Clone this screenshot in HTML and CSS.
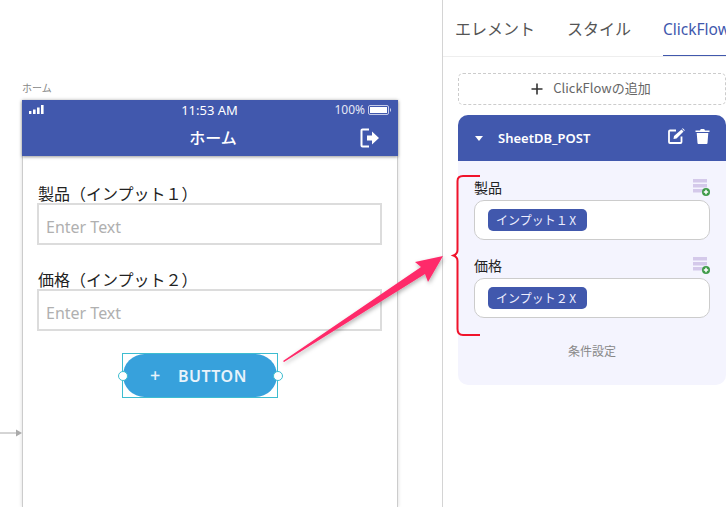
FILE: index.html
```html
<!DOCTYPE html>
<html lang="ja">
<head>
<meta charset="utf-8">
<title>ClickFlow</title>
<link rel="stylesheet" href="styles.css">
</head>
<body>
<div class="app">
  <main class="canvas">
    <div class="screen-label">ホーム</div>
    <section class="phone">
      <header class="appbar">
        <div class="status">
          <svg class="signal" width="16" height="9" viewBox="0 0 16 9"><rect x="0" y="6" width="2.4" height="3" fill="#fff"/><rect x="4" y="4.5" width="2.6" height="4.5" fill="#fff"/><rect x="8" y="2.500" width="2.6" height="6.500" fill="#fff"/><rect x="12" y="0" width="2.600" height="9" fill="#fff"/></svg>
          <span class="time">11:53 AM</span>
          <span class="battery"><span>100%</span>
            <svg width="24" height="10" viewBox="0 0 24 10"><rect x="0.500" y="0.500" width="20" height="9" rx="1.500" fill="none" stroke="#c5cbe8"/><rect x="2" y="2" width="17" height="6" fill="#fff"/><rect x="22" y="3.500" width="1" height="3" fill="#c5cbe8"/></svg>
          </span>
        </div>
        <div class="titlebar">
          <span class="apptitle">ホーム</span>
          <svg class="logout" width="20" height="20" viewBox="0 0 20 20"><path d="M9 1.500H2.500a1 1 0 0 0-1 1v15a1 1 0 0 0 1 1H9" fill="none" stroke="#fff" stroke-width="2"/><path d="M7 7.500h5V3.500l7 6.500-7 6.500v-4H7z" fill="#fff"/></svg>
        </div>
      </header>
      <div class="form">
        <div class="form-field">
          <label class="form-label">製品（インプット１）</label>
          <div class="text-input">Enter Text</div>
        </div>
        <div class="form-field">
          <label class="form-label">価格（インプット２）</label>
          <div class="text-input">Enter Text</div>
        </div>
        <div class="button-row">
          <div class="selection">
            <button class="pill"><span class="plus">+</span>BUTTON</button>
            <i class="handle handle-left"></i>
            <i class="handle handle-right"></i>
          </div>
        </div>
      </div>
    </section>
    <svg class="connector" width="23" height="10" viewBox="0 0 23 10"><path d="M0 5H17" stroke="#aaa" stroke-width="1"/><path d="M16 1.500L22 5L16 8.500z" fill="#aaa"/></svg>
  </main>

  <aside class="panel">
    <nav class="tabs">
      <span class="tab">エレメント</span>
      <span class="tab">スタイル</span>
      <span class="tab tab-active">ClickFlow</span>
    </nav>
    <div class="add-flow"><span class="add-plus"><svg width="12" height="12" viewBox="0 0 12 12"><path d="M6 0.500V11.500M0.500 6H11.500" stroke="#333" stroke-width="1.600"/></svg></span>ClickFlowの追加</div>
    <section class="card">
      <header class="card-head">
        <span class="caret"></span>
        <span class="card-title">SheetDB_POST</span>
        <svg class="edit" width="17" height="16" viewBox="0 0 17 16"><path d="M8 2.500H2a1 1 0 0 0-1 1V14a1 1 0 0 0 1 1h10.500a1 1 0 0 0 1-1V8.500" fill="none" stroke="#fff" stroke-width="1.800"/><path d="M13.500 1.500l2 2L8.500 10.500 5.500 11l.5-3zM14 0.800l.8-.6 2 2-.6.800z" fill="#fff"/></svg>
        <svg class="trash" width="15" height="16" viewBox="0 0 15 16"><path d="M0.500 2.500H5L5.800 1h3.400L10 2.500h4.500V4H0.500z" fill="#fff"/><path d="M1.700 5h11.600l-.8 10a1 1 0 0 1-1 1H3.500a1 1 0 0 1-1-1z" fill="#fff"/></svg>
      </header>
      <div class="card-body">
        <div class="param">
          <div class="param-head">
            <span class="param-label">製品</span>
            <svg class="param-icon" width="18" height="18" viewBox="0 0 18 18"><rect x="0" y="0" width="14" height="3.500" fill="#d4c9ea"/><rect x="0" y="5" width="14" height="3.500" fill="#d4c9ea"/><rect x="0" y="10" width="14" height="3.500" fill="#d4c9ea"/><circle cx="13" cy="13" r="4" fill="#3f9b4a"/><path d="M13 10.800v4.400M10.800 13h4.400" stroke="#fff" stroke-width="1.500"/></svg>
          </div>
          <div class="param-box"><span class="chip">インプット１ X</span></div>
        </div>
        <div class="param">
          <div class="param-head">
            <span class="param-label">価格</span>
            <svg class="param-icon" width="18" height="18" viewBox="0 0 18 18"><rect x="0" y="0" width="14" height="3.500" fill="#d4c9ea"/><rect x="0" y="5" width="14" height="3.500" fill="#d4c9ea"/><rect x="0" y="10" width="14" height="3.500" fill="#d4c9ea"/><circle cx="13" cy="13" r="4" fill="#3f9b4a"/><path d="M13 10.800v4.400M10.800 13h4.400" stroke="#fff" stroke-width="1.500"/></svg>
          </div>
          <div class="param-box"><span class="chip">インプット２ X</span></div>
        </div>
        <div class="conditions">条件設定</div>
      </div>
    </section>
  </aside>
</div>

<svg class="annotation" width="726" height="507" viewBox="0 0 726 507">
  <defs><filter id="soft" x="-20%" y="-20%" width="140%" height="140%"><feDropShadow dx="1" dy="2" stdDeviation="2" flood-color="#000" flood-opacity="0.300"/></filter></defs>
  <path d="M283 361L421 267L415 262L443 256L428 282L425 274L284 362Z" fill="#fe2c6a" filter="url(#soft)"/>
  <path d="M480 176H463Q457.500 176 457.500 181V250Q457.500 254 453.500 255.500Q457.500 257 457.500 261V329Q457.500 335 463 335H480" fill="none" stroke="#f0132b" stroke-width="2"/>
</svg>
</body>
</html>
```
FILE: styles.css
```css
* { box-sizing: border-box; }
html, body { margin: 0; padding: 0; width: 726px; height: 507px; overflow: hidden; background: #fff; }
body { position: relative; font-family: "Noto Sans CJK JP", "Noto Sans", sans-serif; color: #222; }

.app { display: flex; width: 726px; height: 507px; }

.canvas { position: relative; width: 442px; flex: none; }
.screen-label { position: absolute; left: 22px; top: 81px; font-size: 10px; line-height: 14px; color: #888; }
.phone {
  position: absolute; left: 22px; top: 100px; width: 376px; height: 407px;
  background: #fff; border: 1px solid #ccc; border-width: 0 1px;
  box-shadow: 0 0 4px rgba(0,0,0,.15);
}
.connector { position: absolute; left: 0; top: 428px; }

.appbar { background: #4158ad; height: 56px; color: #fff; box-shadow: 0 1px 3px rgba(0,0,0,.4); margin: 0 -1px; position: relative; }
.status { display: flex; align-items: center; justify-content: space-between; height: 20px; padding: 0 6px 0 7px; position: relative; }
.signal { display: block; margin-top: -1px; }
.time { position: absolute; left: 0; right: 0; text-align: center; font: 13px/20px "Noto Sans", sans-serif; padding-right: 1px; }
.battery { display: flex; align-items: center; gap: 3px; font: 12px/20px "Noto Sans", sans-serif; color: #e4e7f5; }
.titlebar { position: relative; display: flex; align-items: center; justify-content: center; height: 36px; padding-bottom: 2px; }
.apptitle { font-size: 16px; font-weight: 500; padding-left: 6px; }
.logout { position: absolute; right: 18px; top: 8px; }

.form { padding: 25px 15px 0 14px; }
.form-field { margin-bottom: 22px; width: 345px; }
.form-label { display: block; font-size: 16px; line-height: 25px; height: 22px; padding-left: 1px; color: #222; white-space: nowrap; }
.text-input {
  position: relative; height: 42px; border: 2px solid #dcdcdc; padding-left: 7px;
  font: 16px/44px "Noto Sans", sans-serif; color: #b0b0b0;
}
.button-row { display: flex; padding-left: 85px; }
.selection { position: relative; width: 156px; height: 45px; border: 1px solid #3dbdd0; }
.pill {
  display: block; width: 100%; height: 100%; border: 0; border-radius: 22px; background: #37a1dc;
  color: #e8f3fb; font: 600 16px/43px "Noto Sans", sans-serif; letter-spacing: .5px; padding: 0 3px 0 0;
}
.plus { font-size: 18px; margin-right: 17px; font-weight: 500; }
.handle { position: absolute; top: 17px; width: 10px; height: 10px; border-radius: 50%; background: #fff; border: 1.500px solid #3dbdd0; }
.handle-left { left: -5px; }
.handle-right { right: -6px; }

.panel { width: 284px; flex: none; border-left: 1px solid #d4d4d4; padding-left: 0; }
.tabs { display: flex; height: 57px; border-bottom: 1px solid #eee; padding-left: 12px; gap: 32px; white-space: nowrap; overflow: hidden; }
.tab { font-size: 16px; line-height: 56px; height: 57px; color: #555; }
.tab-active { color: #4158ad; border-bottom: 2px solid #4158ad; font-family: "Noto Sans", sans-serif; font-size: 15.500px; line-height: 58px; padding-right: 10px; }

.add-flow {
  display: flex; align-items: center; justify-content: center; margin: 16px 0 10px 15px; width: 268px; height: 32px;
  border: 1px dashed #ccc; border-radius: 5px; font-size: 13px; line-height: 30px; color: #666; padding-right: 2px; padding-bottom: 2px;
}
.add-plus { display: flex; margin-right: 10px; margin-top: 2px; }

.card { margin-left: 15px; width: 268px; height: 270px; background: #f4f4fe; border-radius: 10px; overflow: hidden; }
.card-head { display: flex; align-items: center; height: 46px; background: #4158ad; color: #fff; padding: 0 16px 0 17px; }
.caret { width: 0; height: 0; border-left: 4px solid transparent; border-right: 4px solid transparent; border-top: 5px solid #fff; margin-right: 15px; }
.card-title { flex: 1; font: 600 13px/18px "Noto Sans", sans-serif; }
.edit { margin-right: 10px; margin-top: -5px; }
.trash { margin-top: -5px; }
.card-body { padding: 18px 16px 0 16px; }
.param { margin-bottom: 17px; }
.param-head { display: flex; justify-content: space-between; height: 21px; }
.param-label { font-size: 14px; line-height: 17px; color: #222; }
.param-icon { margin-right: -1px; }
.param-box { display: flex; align-items: center; height: 40px; background: #fff; border: 1px solid #ccc; border-radius: 10px; padding-left: 13px; }
.chip { display: block; height: 22px; width: 99px; background: #4158ad; border-radius: 5px; color: #eef; font-size: 12px; line-height: 21px; padding-left: 8px; white-space: nowrap; word-spacing: -1px; }
.conditions { text-align: center; font-size: 12px; line-height: 18px; color: #888; margin-top: 24px; }

.annotation { position: absolute; left: 0; top: 0; pointer-events: none; }
```
